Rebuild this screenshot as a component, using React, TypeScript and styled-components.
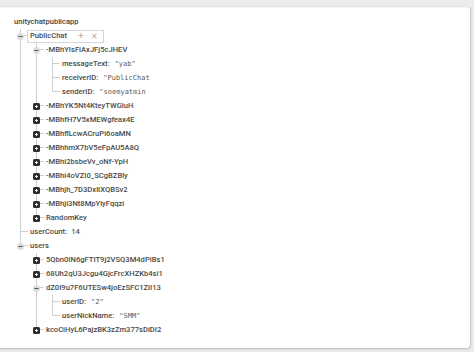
import React from "react";
import styled, { createGlobalStyle } from "styled-components";

const Global = createGlobalStyle`
  html, body { margin: 0; padding: 0; background: #ececec; }
  body { font-family: Roboto, "Noto Sans", Arial, sans-serif; }
`;

type TreeData = {
  k: string;
  v?: string;
  num?: boolean;
  kids?: TreeData[];
  collapsed?: boolean;
  selected?: boolean;
};

const collapsedKey = (k: string): TreeData => ({ k, collapsed: true });

const data: TreeData[] = [
  {
    k: "PublicChat",
    selected: true,
    kids: [
      {
        k: "-MBhYIsFiAxJFj5cJHEV",
        kids: [
          { k: "messageText", v: '"yab"' },
          { k: "receiverID", v: '"PublicChat' },
          { k: "senderID", v: '"soemyatmin' },
        ],
      },
      collapsedKey("-MBhYK5Nt4KteyTWGluH"),
      collapsedKey("-MBhfH7V5xMEWgfeax4E"),
      collapsedKey("-MBhflLcwACruPi6oaMN"),
      collapsedKey("-MBhhmX7bV5eFpAU5A8Q"),
      collapsedKey("-MBhi2bsbeVv_oNf-YpH"),
      collapsedKey("-MBhi4oVZI0_SCgBZBly"),
      collapsedKey("-MBhjh_7D3DxlIXQBSv2"),
      collapsedKey("-MBhji3Nt8MpYlyFqqzi"),
      collapsedKey("RandomKey"),
    ],
  },
  { k: "userCount", v: "14", num: true },
  {
    k: "users",
    kids: [
      collapsedKey("5Qbn0IN6gFTIT9j2VSQ3M4dPiBs1"),
      collapsedKey("68Uh2qU3Jcgu4GjcFrcXHZKb4si1"),
      {
        k: "dZ0I9u7F6UTESw4joEzSFC1ZlI13",
        kids: [
          { k: "userID", v: '"2"' },
          { k: "userNickName", v: '"SMM"' },
        ],
      },
      collapsedKey("kcoCiHyL6PajzBK3zZm377sDiDI2"),
    ],
  },
];

const Page = styled.div`
  padding: 7px 4px 4px 0;
  height: 352px;
  box-sizing: border-box;
`;

const Card = styled.div`
  background: #fff;
  height: 341px;
  box-sizing: border-box;
  padding: 7px 0 0 14px;
  border-radius: 0 0 3px 0;
  box-shadow: 0 1px 2px rgba(0, 0, 0, 0.22), 1px 0 1px rgba(0, 0, 0, 0.12);
  border-top: 1px solid #f4f4f4;
`;

const Row = styled.div`
  display: flex;
  align-items: center;
  height: 14px;
  line-height: 14px;
  font-size: 7.6px;
  white-space: nowrap;
`;

const RootLabel = styled.span`
  font-weight: 500;
  color: #444;
`;

const Children = styled.div`
  margin-left: 6px;
`;

const Item = styled.div`
  display: grid;
  grid-template-columns: 10px auto;
`;

const Connector = styled.div`
  display: flex;
  flex-direction: column;
`;

const Elbow = styled.div`
  width: 8px;
  height: 7px;
  box-sizing: border-box;
  border-left: 1px solid #cfcfcf;
  border-bottom: 1px solid #cfcfcf;
`;

const Rail = styled.div<{ $show: boolean }>`
  flex: 1;
  border-left: 1px solid ${(p) => (p.$show ? "#cfcfcf" : "transparent")};
`;

const Body = styled.div`
  display: flex;
  flex-direction: column;
`;

const ToggleBox = styled.span`
  display: inline-flex;
  width: 7px;
  height: 7px;
  margin-left: -13px;
  margin-right: 6px;
  position: relative;
  z-index: 1;
  svg { display: block; }
`;

const Key = styled.span<{ $selected?: boolean }>`
  display: inline-flex;
  align-items: center;
  font-weight: 500;
  color: #4a4a4a;
  ${(p) =>
    p.$selected
      ? `
    height: 11px;
    margin-left: -3px;
    padding: 0 6px 0 2px;
    border: 1px solid #d6d6d6;
  `
      : ""}
`;

const Value = styled.span<{ $num?: boolean }>`
  margin-left: ${(p) => (p.$num ? 4 : 5)}px;
  color: #5a5a5a;
  font-family: ${(p) =>
    p.$num ? 'Roboto, Arial, sans-serif' : '"DejaVu Sans Mono", "Liberation Mono", monospace'};
  font-size: ${(p) => (p.$num ? "7.6px" : "7px")};
  font-weight: ${(p) => (p.$num ? 500 : 400)};
`;

const Action = styled.span<{ $gap: number }>`
  margin-left: ${(p) => p.$gap}px;
  color: #8a8a8a;
  font-weight: 300;
  font-size: 10px;
  line-height: 10px;
`;

const Toggle = ({ open }: { open: boolean }) => (
  <ToggleBox>
    {open ? (
      <svg width="7" height="7" viewBox="0 0 7 7">
        <circle cx="3.5" cy="3.5" r="3.5" fill="#dcdcdc" />
        <rect x="1.5" y="3" width="4" height="1" fill="#555" />
      </svg>
    ) : (
      <svg width="7" height="7" viewBox="0 0 7 7">
        <rect x="0" y="0" width="7" height="7" rx="1.5" fill="#2e2e2e" />
        <rect x="2" y="3" width="3" height="1" fill="#e8e8e8" />
        <rect x="3" y="2" width="1" height="3" fill="#e8e8e8" />
      </svg>
    )}
  </ToggleBox>
);

const TreeNode = ({ node, last }: { node: TreeData; last: boolean }) => {
  const hasToggle = !!node.kids || !!node.collapsed;
  return (
    <Item>
      <Connector>
        <Elbow />
        <Rail $show={!last} />
      </Connector>
      <Body>
        <Row>
          {hasToggle && <Toggle open={!node.collapsed} />}
          <Key $selected={node.selected}>
            {node.v !== undefined ? `${node.k}:` : node.k}
            {node.selected && (
              <>
                <Action $gap={11}>+</Action>
                <Action $gap={8}>×</Action>
              </>
            )}
          </Key>
          {node.v !== undefined && <Value $num={node.num}>{node.v}</Value>}
        </Row>
        {node.kids && !node.collapsed && (
          <Children>
            {node.kids.map((c, i) => (
              <TreeNode key={c.k} node={c} last={i === node.kids!.length - 1} />
            ))}
          </Children>
        )}
      </Body>
    </Item>
  );
};

export default function App() {
  return (
    <>
      <Global />
      <Page>
        <Card>
          <Row>
            <RootLabel>unitychatpublicapp</RootLabel>
          </Row>
          <Children>
            {data.map((n, i) => (
              <TreeNode key={n.k} node={n} last={i === data.length - 1} />
            ))}
          </Children>
        </Card>
      </Page>
    </>
  );
}
